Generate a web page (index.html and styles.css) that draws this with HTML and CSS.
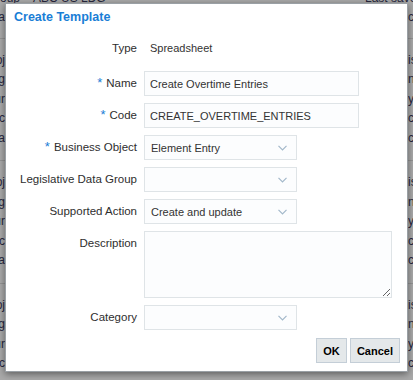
FILE: index.html
```html
<!DOCTYPE html>
<html lang="en">
	<head>
		<title>Create Template</title>
		<meta charset="utf-8"/>
		<link rel="stylesheet" href="styles.css">
	</head>
	<body>

		<!-- page behind the modal -->
		<div class="page">
			<div class="pageTop">
				<span class="topA">oup</span>
				<span class="topB">ABC US LDG</span>
				<span class="topC">Last saved</span>
			</div>
			<div class="pageLine headLine"><span class="lcol">Data</span><span class="rcol">c</span></div>

			<div class="pageBlock">
				<div class="pageLine"><span class="lcol">Proj</span><span class="rcol">is</span></div>
				<div class="pageLine"><span class="lcol">Lang</span><span class="rcol">n</span></div>
				<div class="pageLine"><span class="lcol">Pur</span><span class="rcol">y</span></div>
				<div class="pageLine"><span class="lcol">Prc</span><span class="rcol">c</span></div>
				<div class="pageLine"><span class="lcol">Da</span><span class="rcol">c</span></div>
			</div>
			<div class="pageBlock">
				<div class="pageLine"><span class="lcol">Proj</span><span class="rcol">is</span></div>
				<div class="pageLine"><span class="lcol">Lang</span><span class="rcol">n</span></div>
				<div class="pageLine"><span class="lcol">Pur</span><span class="rcol">y</span></div>
				<div class="pageLine"><span class="lcol">Prc</span><span class="rcol">c</span></div>
				<div class="pageLine"><span class="lcol">Da</span><span class="rcol">c</span></div>
			</div>
			<div class="pageBlock lastBlock">
				<div class="pageLine"><span class="lcol">Proj</span><span class="rcol">is</span></div>
				<div class="pageLine"><span class="lcol">Lang</span><span class="rcol">n</span></div>
				<div class="pageLine"><span class="lcol">Pur</span><span class="rcol">y</span></div>
				<div class="pageLine"><span class="lcol">Prc</span><span class="rcol">c</span></div>
			</div>
		</div>

		<!-- the dialog -->
		<div class="dialog">
			<h1 class="dialogTitle">Create Template</h1>

			<div class="form">
				<span class="label typeRow">Type</span>
				<span class="value typeRow">Spreadsheet</span>

				<span class="label"><span class="req">*</span>Name</span>
				<input class="field" type="text" value="Create Overtime Entries">

				<span class="label"><span class="req">*</span>Code</span>
				<input class="field" type="text" value="CREATE_OVERTIME_ENTRIES">

				<span class="label"><span class="req">*</span>Business Object</span>
				<div class="select">
					<span>Element Entry</span>
					<svg class="chev" width="9" height="6" viewBox="0 0 9 6"><polyline points="0.5,0.8 4.5,4.8 8.5,0.8" fill="none" stroke="#a3b8ca" stroke-width="1.2"/></svg>
				</div>

				<span class="label">Legislative Data Group</span>
				<div class="select">
					<span></span>
					<svg class="chev" width="9" height="6" viewBox="0 0 9 6"><polyline points="0.5,0.8 4.5,4.8 8.5,0.8" fill="none" stroke="#a3b8ca" stroke-width="1.2"/></svg>
				</div>

				<span class="label">Supported Action</span>
				<div class="select">
					<span>Create and update</span>
					<svg class="chev" width="9" height="6" viewBox="0 0 9 6"><polyline points="0.5,0.8 4.5,4.8 8.5,0.8" fill="none" stroke="#a3b8ca" stroke-width="1.2"/></svg>
				</div>

				<span class="label">Description</span>
				<textarea class="area"></textarea>

				<span class="label">Category</span>
				<div class="select">
					<span></span>
					<svg class="chev" width="9" height="6" viewBox="0 0 9 6"><polyline points="0.5,0.8 4.5,4.8 8.5,0.8" fill="none" stroke="#a3b8ca" stroke-width="1.2"/></svg>
				</div>
			</div>

			<div class="actions">
				<button class="btn okBtn">OK</button>
				<button class="btn">Cancel</button>
			</div>
		</div>

	</body>
</html>
```

FILE: styles.css
```css
body, html {
	margin: 0px;
	height: 380px;
	overflow: hidden;
	font-family: "Liberation Sans", Arial, sans-serif;
}

body {
	background-color: #a9a9a9;
	position: relative;
}

/* ---------- dimmed page behind ---------- */
.page {
	font-size: 12px;
	color: #27273d;
}

.pageTop {
	display: flex;
	margin-top: -12px;
	height: 20px;
	line-height: 20px;
	white-space: nowrap;
}
.topA {
	width: 33px;
}
.topB {
	flex: 1;
}
.topC {
	width: 48px;
}

.pageLine {
	display: flex;
	height: 19.5px;
	line-height: 19.5px;
}
.headLine {
	margin-bottom: 10px;
}

.lcol {
	margin-left: -31px;
	width: 36px;
	text-align: right;
	white-space: nowrap;
}
.rcol {
	margin-left: auto;
	width: 5px;
	white-space: nowrap;
}

.pageBlock {
	border-top: 1px solid #939393;
	padding: 12px 0;
}
.lastBlock {
	padding-bottom: 0;
}

/* ---------- dialog ---------- */
.dialog {
	position: absolute;
	left: 5px;
	top: 3px;
	width: 403px;
	height: 369px;
	box-sizing: border-box;
	background-color: #fff;
	border: 1px solid #9aa0a5;
	box-shadow: 0 2px 7px rgba(0, 0, 0, 0.45);
}

.dialogTitle {
	margin: 0;
	padding: 5px 8px 0;
	font-size: 12.5px;
	line-height: 16px;
	font-weight: bold;
	color: #1a7ed6;
}

.form {
	display: grid;
	grid-template-columns: 131px auto;
	column-gap: 7px;
	row-gap: 7px;
	padding-top: 11px;
	align-items: start;
	justify-items: start;
}

.label {
	justify-self: end;
	height: 25px;
	line-height: 25px;
	font-size: 11.5px;
	color: #2e2e2e;
	white-space: nowrap;
}
.req {
	color: #1a7ed6;
	font-size: 13px;
	line-height: 1;
	margin-right: 4px;
}

.value {
	line-height: 25px;
	font-size: 11px;
	color: #333;
	padding-left: 6px;
}
.typeRow {
	margin-bottom: 3px;
}

.field {
	box-sizing: border-box;
	width: 215px;
	height: 25px;
	margin: 0;
	padding: 0 5px;
	border: 1px solid #dfe4e7;
	border-radius: 0;
	background-color: #fcfdfe;
	font: 11px "Liberation Sans", Arial, sans-serif;
	color: #333;
	outline: none;
}

.select {
	box-sizing: border-box;
	width: 153px;
	height: 25px;
	display: flex;
	align-items: center;
	justify-content: space-between;
	padding: 0 9px 0 6px;
	border: 1px solid #dfe4e7;
	background-color: #fcfdfe;
	font-size: 11px;
	color: #333;
}
.chev {
	display: block;
}

.area {
	box-sizing: border-box;
	display: block;
	width: 248px;
	height: 67px;
	margin: 0;
	padding: 4px 5px;
	border: 1px solid #dfe4e7;
	border-radius: 0;
	background-color: #fcfdfe;
	resize: both;
	font: 11px "Liberation Sans", Arial, sans-serif;
	outline: none;
}

.actions {
	display: flex;
	justify-content: flex-end;
	gap: 3px;
	margin-top: 8px;
	padding-right: 7px;
}

.btn {
	height: 25px;
	padding: 0 6px;
	border: 1px solid #c4ced7;
	border-radius: 0;
	background-color: #e4e8ea;
	font: bold 11px "Liberation Sans", Arial, sans-serif;
	color: #000;
}
.okBtn {
	min-width: 31px;
}
```
